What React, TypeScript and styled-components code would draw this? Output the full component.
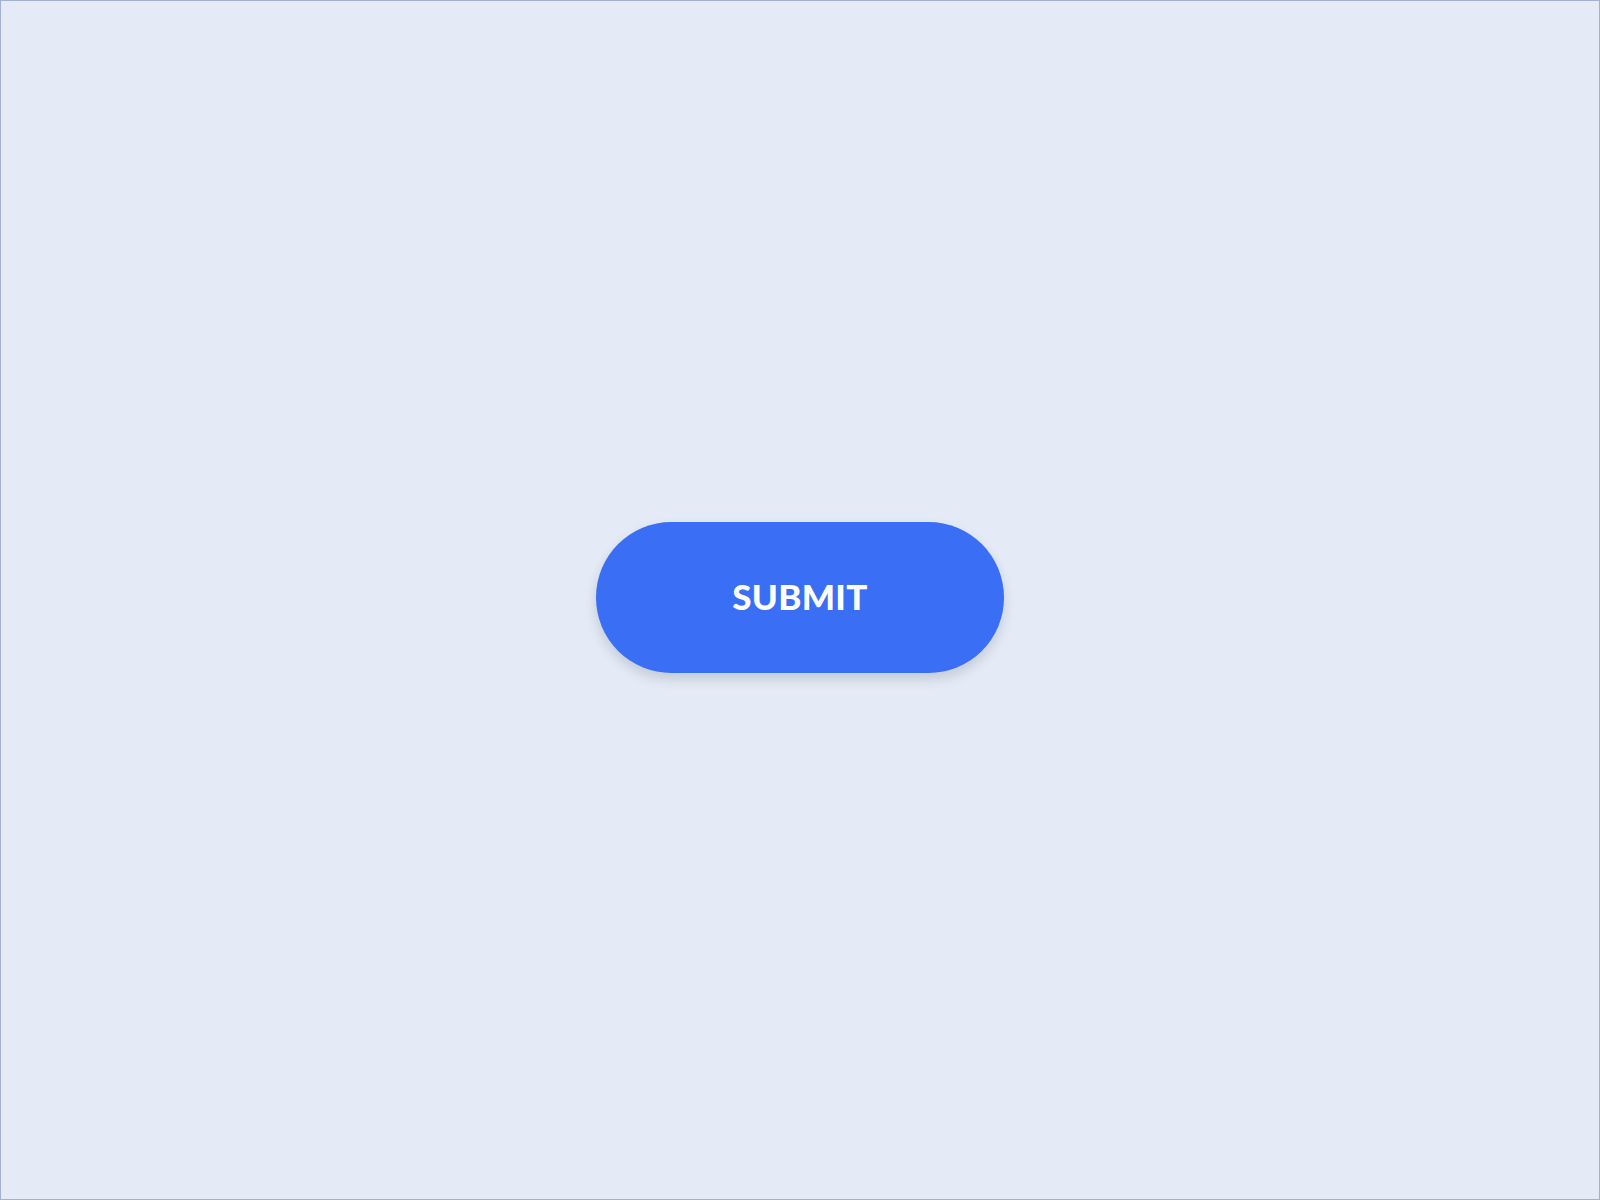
import React from "react";
import styled, { createGlobalStyle } from "styled-components";

const GlobalStyle = createGlobalStyle`
* {
	box-sizing: border-box;
}
body {
	margin: 0;
	background-color: #e4ebf6;
	font-family: "Lato", "Liberation Sans", sans-serif;
}
`;

export default function App() {
	return (
		<>
			<GlobalStyle />
			<Page>
				<SubmitButton type="button">SUBMIT</SubmitButton>
			</Page>
		</>
	);
}

const Page = styled.main`
height: 1200px;
border: 1px solid #a3b0d2;
background-color: #e4ebf6;
display: flex;
justify-content: center;
align-items: center;
padding-bottom: 5px;
`;

const SubmitButton = styled.button`
width: 408px;
height: 151px;
border: none;
border-radius: 76px;
padding: 0 0 4px;
background-color: #3a6ef5;
color: #ffffff;
font-family: "Lato", "Liberation Sans", sans-serif;
font-size: 35px;
font-weight: 900;
letter-spacing: 0.3px;
box-shadow: 0 6px 12px rgba(60, 70, 100, 0.2);
cursor: pointer;
`;
